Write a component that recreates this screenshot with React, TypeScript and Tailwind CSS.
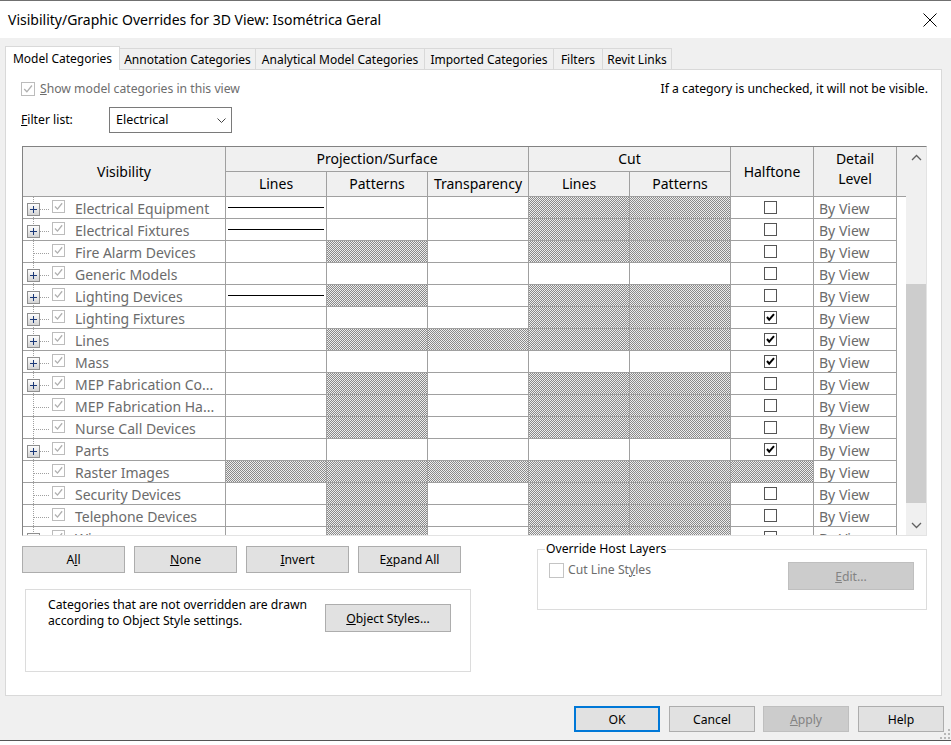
import React from "react";

const HATCH =
  "bg-[image:repeating-conic-gradient(#8a8a8a_0%_25%,#ededed_0%_50%)] bg-[length:2px_2px]";

type Row = { n: string; e: boolean; l: boolean; m: string; h: "0" | "1" | "h" };

const ROWS: Row[] = [
  { n: "Electrical Equipment", e: true, l: true, m: "00011", h: "0" },
  { n: "Electrical Fixtures", e: true, l: true, m: "00011", h: "0" },
  { n: "Fire Alarm Devices", e: false, l: false, m: "01011", h: "0" },
  { n: "Generic Models", e: true, l: false, m: "00000", h: "0" },
  { n: "Lighting Devices", e: true, l: true, m: "01011", h: "0" },
  { n: "Lighting Fixtures", e: true, l: false, m: "00011", h: "1" },
  { n: "Lines", e: true, l: false, m: "01111", h: "1" },
  { n: "Mass", e: true, l: false, m: "00000", h: "1" },
  { n: "MEP Fabrication Co...", e: true, l: false, m: "01011", h: "0" },
  { n: "MEP Fabrication Ha...", e: false, l: false, m: "01011", h: "0" },
  { n: "Nurse Call Devices", e: false, l: false, m: "01011", h: "0" },
  { n: "Parts", e: true, l: false, m: "00000", h: "1" },
  { n: "Raster Images", e: false, l: false, m: "11111", h: "h" },
  { n: "Security Devices", e: false, l: false, m: "01011", h: "0" },
  { n: "Telephone Devices", e: false, l: false, m: "01011", h: "0" },
  { n: "Wires", e: true, l: false, m: "01011", h: "0" },
];

const TABS: { t: string; w: string }[] = [
  { t: "Annotation Categories", w: "w-[136px]" },
  { t: "Analytical Model Categories", w: "w-[169px]" },
  { t: "Imported Categories", w: "w-[129px]" },
  { t: "Filters", w: "w-[49px]" },
  { t: "Revit Links", w: "w-[69px]" },
];

function Tree({ exp }: { exp: boolean }) {
  return (
    <svg width="29" height="21" className="block shrink-0">
      <defs>
        <linearGradient id="expg" x1="0" y1="0" x2="0" y2="1">
          <stop offset="0" stopColor="#ffffff" />
          <stop offset="1" stopColor="#d2d2d2" />
        </linearGradient>
      </defs>
      <line x1="10.5" y1="0" x2="10.5" y2="21" stroke="#a0a0a0" strokeDasharray="1 1" />
      <line x1={exp ? 17 : 11} y1="12.5" x2="26" y2="12.5" stroke="#a0a0a0" strokeDasharray="1 1" />
      {exp && (
        <g>
          <rect x="4.5" y="6.5" width="12" height="12" fill="url(#expg)" stroke="#8f8f8f" />
          <line x1="7" y1="12.5" x2="14" y2="12.5" stroke="#1c3a78" />
          <line x1="10.5" y1="9" x2="10.5" y2="16" stroke="#1c3a78" />
        </g>
      )}
    </svg>
  );
}

function GrayCheck({ size }: { size: number }) {
  const s = size;
  return (
    <svg width={s} height={s} className="block shrink-0">
      <rect x="0.5" y="0.5" width={s - 1} height={s - 1} fill="#fff" stroke="#bcbcbc" />
      <polyline
        points={`${s * 0.23},${s * 0.5} ${s * 0.42},${s * 0.7} ${s * 0.78},${s * 0.25}`}
        fill="none"
        stroke="#b0b0b0"
        strokeWidth="1.3"
      />
    </svg>
  );
}

function HalfCheck({ on }: { on: boolean }) {
  return (
    <svg width="13" height="13" className="block">
      <rect x="0.5" y="0.5" width="12" height="12" fill="#fff" stroke="#555" />
      {on && <path d="M3 6 L5.2 8.6 L10 3.2" fill="none" stroke="#000" strokeWidth="2" />}
    </svg>
  );
}

function GridRow({ r }: { r: Row }) {
  const cells = [0, 1, 2, 3, 4];
  return (
    <div className="flex h-[22px] shrink-0">
      <div className="w-[203px] h-[22px] border-r border-b border-[#a0a0a0] flex items-start">
        <Tree exp={r.e} />
        <div className="mt-[3px]">
          <GrayCheck size={13} />
        </div>
        <span className="ml-[10px] pt-px text-[14px] leading-[21px] text-[#6b6b6b] whitespace-nowrap">
          {r.n}
        </span>
      </div>
      {cells.map((i) => (
        <div
          key={i}
          className={`w-[101px] h-[22px] border-r border-b border-[#a0a0a0] ${r.m[i] === "1" ? HATCH : ""}`}
        >
          {i === 0 && r.l && <div className="ml-[2px] mt-[10px] w-[96px] h-px bg-black" />}
        </div>
      ))}
      <div
        className={`w-[83px] h-[22px] border-r border-b border-[#a0a0a0] pl-[33px] pt-[4px] ${
          r.h === "h" ? HATCH : ""
        }`}
      >
        {r.h !== "h" && <HalfCheck on={r.h === "1"} />}
      </div>
      <div className="w-[83px] h-[22px] border-r border-b border-[#a0a0a0] pl-[5px] pt-px text-[14px] leading-[21px] text-[#6b6b6b] whitespace-nowrap">
        By View
      </div>
    </div>
  );
}

function Btn({
  children,
  className,
}: {
  children: React.ReactNode;
  className: string;
}) {
  return (
    <div
      className={`flex items-center justify-center pt-[2px] text-[12.2px] leading-none ${className}`}
    >
      {children}
    </div>
  );
}

export default function App() {
  const hdr = "border-r border-b border-[#a0a0a0] flex items-center justify-center";
  return (
    <div className="w-[951px] h-[745px] overflow-hidden bg-white font-['Noto_Sans',sans-serif] text-black">
      <div className="relative w-[951px] h-[741px] bg-[#f0f0f0] border-b border-[#555555] flex flex-col">
        {/* title bar */}
        <div className="h-[38px] shrink-0 bg-white border-t border-[#707070] flex items-center justify-between pl-[8px] pr-[14px]">
          <span className="text-[14px] leading-none whitespace-nowrap">
            Visibility/Graphic Overrides for 3D View: Isométrica Geral
          </span>
          <svg width="14" height="14" viewBox="0 0 14 14" className="block">
            <path d="M0.5 0.5 L13.5 13.5 M13.5 0.5 L0.5 13.5" stroke="#000" strokeWidth="1" />
          </svg>
        </div>

        {/* tabs + panel */}
        <div className="pl-[5px] pr-[9px] pt-[8px] shrink-0">
          <div className="flex items-end h-[23px] text-[12px] leading-none">
            <div className="relative z-10 w-[115px] h-[24px] -mb-px bg-white border-l border-t border-r border-[#d9d9d9] flex items-center justify-center whitespace-nowrap">
              Model Categories
            </div>
            {TABS.map((t) => (
              <div
                key={t.t}
                className={`${t.w} h-[21px] border-t border-r border-[#d9d9d9] bg-[#f0f0f0] flex items-center justify-center pt-[2px] whitespace-nowrap`}
              >
                {t.t}
              </div>
            ))}
          </div>

          <div className="w-[937px] h-[627px] bg-white border border-[#d9d9d9] flex flex-col">
            {/* show model categories */}
            <div className="mt-[11px] h-[16px] flex items-center pl-[15px] pr-[13px] text-[12.2px] leading-none">
              <GrayCheck size={14} />
              <span className="ml-[5px] text-[#6d6d6d] whitespace-nowrap">
                <u>S</u>how model categories in this view
              </span>
              <span className="ml-auto whitespace-nowrap">
                If a category is unchecked, it will not be visible.
              </span>
            </div>

            {/* filter list */}
            <div className="mt-[10px] h-[26px] flex items-center pl-[15px] text-[12.2px] leading-none">
              <span className="w-[88px] whitespace-nowrap">
                <u>F</u>ilter list:
              </span>
              <div className="w-[123px] h-[26px] border border-[#7a7a7a] bg-white flex items-center pl-[6px] pr-[5px]">
                <span className="text-[12.5px]">Electrical</span>
                <svg width="9" height="5" className="ml-auto block">
                  <polyline points="0.5,0.5 4.5,4.5 8.5,0.5" fill="none" stroke="#444" />
                </svg>
              </div>
            </div>

            {/* table */}
            <div className="mt-[13px] ml-[16px] w-[905px] h-[390px] border-t border-l border-[#828282] border-r-[#e3e3e3] border-b-[#e3e3e3] border-r border-b flex">
              <div className="w-[883px] h-[388px] flex flex-col">
                <div className="grid grid-cols-[203px_101px_101px_101px_101px_101px_83px_83px_9px] grid-rows-[25px_25px] bg-[#f0f0f0] text-[14px] leading-none shrink-0">
                  <div className={`row-span-2 ${hdr}`}>Visibility</div>
                  <div className={`col-span-3 ${hdr}`}>Projection/Surface</div>
                  <div className={`col-span-2 ${hdr}`}>Cut</div>
                  <div className={`row-span-2 ${hdr}`}>Halftone</div>
                  <div className={`row-span-2 ${hdr} text-center leading-[20px] pb-[6px]`}>
                    Detail
                    <br />
                    Level
                  </div>
                  <div className="row-span-2 border-b border-[#a0a0a0]" />
                  <div className={hdr}>Lines</div>
                  <div className={hdr}>Patterns</div>
                  <div className={hdr}>Transparency</div>
                  <div className={hdr}>Lines</div>
                  <div className={hdr}>Patterns</div>
                </div>
                <div className="h-[338px] overflow-hidden bg-white flex flex-col">
                  {ROWS.map((r) => (
                    <GridRow key={r.n} r={r} />
                  ))}
                </div>
              </div>
              {/* scrollbar */}
              <div className="w-[20px] h-[388px] bg-[#f0f0f0] flex flex-col">
                <div className="h-[20px] flex items-start justify-center pt-[7px]">
                  <svg width="11" height="7" className="block">
                    <polyline points="1,6 5.5,1.5 10,6" fill="none" stroke="#606060" strokeWidth="1.3" />
                  </svg>
                </div>
                <div className="flex-1 pt-[117px]">
                  <div className="h-[219px] bg-[#cdcdcd]" />
                </div>
                <div className="h-[20px] flex items-start justify-center pt-[7px]">
                  <svg width="11" height="7" className="block">
                    <polyline points="1,1 5.5,5.5 10,1" fill="none" stroke="#606060" strokeWidth="1.3" />
                  </svg>
                </div>
              </div>
            </div>

            {/* lower section */}
            <div className="mt-[5px] flex items-start">
              <div className="ml-[16px] w-[449px] flex flex-col">
                <div className="mt-[5px] flex gap-[9px]">
                  <Btn className="w-[103px] h-[27px] bg-[#e1e1e1] border border-[#adadad]">
                    A<u>l</u>l
                  </Btn>
                  <Btn className="w-[103px] h-[27px] bg-[#e1e1e1] border border-[#adadad]">
                    <u>N</u>one
                  </Btn>
                  <Btn className="w-[103px] h-[27px] bg-[#e1e1e1] border border-[#adadad]">
                    <u>I</u>nvert
                  </Btn>
                  <Btn className="w-[103px] h-[27px] bg-[#e1e1e1] border border-[#adadad]">
                    E<u>x</u>pand All
                  </Btn>
                </div>
                <div className="mt-[16px] ml-[3px] w-[446px] h-[83px] border border-[#dcdcdc] flex items-start">
                  <div className="pl-[22px] pt-[7px] text-[12.2px] leading-[16px] whitespace-nowrap">
                    Categories that are not overridden are drawn
                    <br />
                    according to Object Style settings.
                  </div>
                  <Btn className="ml-auto mr-[19px] mt-[14px] w-[126px] h-[28px] bg-[#e1e1e1] border border-[#adadad]">
                    <span>
                      <u>O</u>bject Styles...
                    </span>
                  </Btn>
                </div>
              </div>
              <fieldset className="ml-[66px] w-[390px] border border-[#dcdcdc]">
                <legend className="ml-[7px] px-px text-[12.2px] leading-[16px]">
                  Override Host Layers
                </legend>
                <div className="flex items-start pb-[19px]">
                  <div className="ml-[11px] mt-[6px] w-[15px] h-[15px] border border-[#c4c4c4] bg-white" />
                  <span className="ml-[4px] mt-[5px] text-[12.2px] leading-[16px] text-[#6d6d6d] whitespace-nowrap">
                    Cut Line St<u>y</u>les
                  </span>
                  <Btn className="ml-auto mr-[12px] mt-[5px] w-[126px] h-[28px] bg-[#cccccc] border border-[#bfbfbf] text-[#838383]">
                    <span>
                      <u>E</u>dit...
                    </span>
                  </Btn>
                </div>
              </fieldset>
            </div>
          </div>
        </div>

        {/* bottom buttons */}
        <div className="mt-[10px] h-[26px] flex justify-end pr-[7px] shrink-0">
          <Btn className="w-[86px] h-[26px] bg-[#e1e1e1] border-2 border-[#0078d7]">OK</Btn>
          <Btn className="ml-[9px] w-[86px] h-[26px] bg-[#e1e1e1] border border-[#adadad]">Cancel</Btn>
          <Btn className="ml-[8px] w-[86px] h-[26px] bg-[#cccccc] border border-[#bfbfbf] text-[#838383]">
            <span>
              <u>A</u>pply
            </span>
          </Btn>
          <Btn className="ml-[9px] w-[86px] h-[26px] bg-[#e1e1e1] border border-[#adadad]">Help</Btn>
        </div>

        {/* resize grip */}
        <svg width="10" height="10" className="absolute right-[1px] bottom-[1px] block">
          <rect x="8" y="0" width="2" height="2" fill="#b8b8b8" />
          <rect x="4" y="4" width="2" height="2" fill="#b8b8b8" />
          <rect x="8" y="4" width="2" height="2" fill="#b8b8b8" />
          <rect x="0" y="8" width="2" height="2" fill="#b8b8b8" />
          <rect x="4" y="8" width="2" height="2" fill="#b8b8b8" />
          <rect x="8" y="8" width="2" height="2" fill="#b8b8b8" />
        </svg>
      </div>
    </div>
  );
}
